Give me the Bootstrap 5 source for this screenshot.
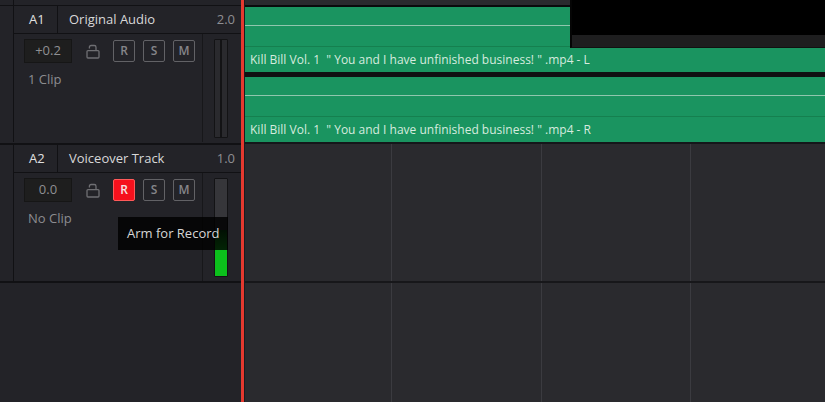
<!DOCTYPE html>
<html lang="en">
<head>
    <meta charset="UTF-8">
    <meta name="viewport" content="width=device-width, initial-scale=1.0">
    <title>Timeline</title>
    <link href="https://cdn.jsdelivr.net/npm/bootstrap@5.3.0/dist/css/bootstrap.min.css" rel="stylesheet">
    <style>
        html, body { height: 100%; }
        body { background: #28282c; color: #c4c4c6; font-family: "Open Sans", "Liberation Sans", sans-serif; font-size: 13px; overflow: hidden; }
        .editor { width: 825px; height: 402px; }
        .tracks { width: 241px; background: #232328; }
        .edge-line { margin-left: 13px; border-left: 1px solid #111114; }
        .top-gap { height: 6px; border-bottom: 1px solid #111114; }
        .track-one { height: 139px; border-bottom: 2px solid #111114; }
        .track-two { height: 138px; border-bottom: 2px solid #111114; }
        .track-head { height: 28px; border-bottom: 1px solid #111114; }
        .track-id { width: 44px; border-right: 1px solid #111114; color: #e0e0e0; padding-left: 15px; }
        .track-name { color: #d8d8d8; padding-left: 11px; }
        .track-gain { color: #8e8e92; padding-right: 6px; }
        .track-controls { height: 108px; }
        .controls { width: 189px; border-right: 1px solid #17171a; padding: 5px 0 0 10px; }
        .vol-box { width: 48px; height: 24px; background: #1e1e1e; border: 1px solid #161616; color: #8f8f92; }
        .lock-icon { margin: 0 13px 0 14px; }
        .rsm { width: 22px; height: 22px; border: 1px solid #626266; border-radius: 2px; color: #86868a; font-size: 12px; font-weight: 600; padding: 0; background: transparent; line-height: 20px; }
        .rsm-on { background: #f5111d; border-color: #ff5a5a; color: #f4e4e4; }
        .clip-count { color: #8c8c90; padding: 7px 0 0 4px; }
        .meter-col { padding: 5px 0 0 11px; }
        .meter { width: 14px; height: 99px; background: #36363a; border: 1px solid #131315; border-radius: 1px; }
        .meter-split { background: linear-gradient(90deg, #2a2a2e 45%, #131315 45%, #131315 55%, #2a2a2e 55%); }
        .meter-fill { height: 46px; background: linear-gradient(180deg, #0a5a12 0, #0cc01c 40%); }
        .playhead { width: 3px; background: #e5392f; z-index: 3; }
        .timeline { background: #111114; border-left: 1px solid #1b1b1f; }
        .lane-top { height: 7px; background: #2a2a2e; border-bottom: 2px solid #0a0a0c; }
        .clip-wave { height: 39px; background: #1a9460; position: relative; }
        .clip-wave::after { content: ""; position: absolute; left: 0; right: 0; top: 18px; height: 1px; background: #8fc6ad; }
        .clip-label { height: 26px; background: #1a9460; border-top: 1px solid #15804f; color: #d6ebdf; font-size: 12px; line-height: 25px; padding-left: 5px; white-space: pre; }
        .clip-gap { height: 5px; background: #101012; }
        .clip-end { height: 2px; background: #14171a; }
        .grid-row { background-color: #2a2a2e; background-image: linear-gradient(90deg, #3b3b40 1px, transparent 1px), linear-gradient(90deg, #3b3b40 1px, transparent 1px), linear-gradient(90deg, #3b3b40 1px, transparent 1px); background-repeat: no-repeat; background-position: 146px 0, 296px 0, 445px 0; background-size: 1px 100%; }
        .grid-a2 { height: 139px; border-bottom: 2px solid #17171a; }
        .viewer-overlay { top: 0; left: 570px; width: 255px; height: 48px; background: #1e1e1f; border-left: 2px solid #050505; border-bottom: 1px solid #111; z-index: 2; }
        .viewer-black { height: 35px; background: #000; }
        .record-tip { left: 118px; top: 217px; width: 110px; height: 33px; background: rgba(0, 0, 0, .82); color: #d6d6d6; font-size: 13px; line-height: 33px; padding-left: 9px; white-space: nowrap; z-index: 4; }
    </style>
</head>
<body>

<div class="editor d-flex position-relative">
    <div class="tracks flex-shrink-0">
        <div class="top-gap"><div class="edge-line h-100"></div></div>

        <div class="track-one">
            <div class="edge-line">
                <div class="track-head d-flex align-items-center">
                    <div class="track-id h-100 d-flex align-items-center">A1</div>
                    <div class="track-name flex-grow-1">Original Audio</div>
                    <div class="track-gain">2.0</div>
                </div>
                <div class="track-controls d-flex">
                    <div class="controls flex-shrink-0">
                        <div class="d-flex align-items-center">
                            <div class="vol-box d-flex align-items-center justify-content-center">+0.2</div>
                            <svg class="lock-icon" width="14" height="16" viewBox="0 0 14 16" fill="none" stroke="#6f6f73" stroke-width="1.3"><rect x="1" y="7.6" width="12" height="7.4" rx="1"/><path d="M3.4 5.5V4.2q0-1.7 1.7-1.7h3.2q1.7 0 1.7 1.7v3.2"/></svg>
                            <div class="d-flex gap-2">
                                <button class="rsm">R</button>
                                <button class="rsm">S</button>
                                <button class="rsm">M</button>
                            </div>
                        </div>
                        <div class="clip-count">1 Clip</div>
                    </div>
                    <div class="meter-col">
                        <div class="meter meter-split"></div>
                    </div>
                </div>
            </div>
        </div>

        <div class="track-two">
            <div class="edge-line">
                <div class="track-head d-flex align-items-center">
                    <div class="track-id h-100 d-flex align-items-center">A2</div>
                    <div class="track-name flex-grow-1">Voiceover Track</div>
                    <div class="track-gain">1.0</div>
                </div>
                <div class="track-controls d-flex">
                    <div class="controls flex-shrink-0">
                        <div class="d-flex align-items-center">
                            <div class="vol-box d-flex align-items-center justify-content-center">0.0</div>
                            <svg class="lock-icon" width="14" height="16" viewBox="0 0 14 16" fill="none" stroke="#6f6f73" stroke-width="1.3"><rect x="1" y="7.6" width="12" height="7.4" rx="1"/><path d="M3.4 5.5V4.2q0-1.7 1.7-1.7h3.2q1.7 0 1.7 1.7v3.2"/></svg>
                            <div class="d-flex gap-2">
                                <button class="rsm rsm-on">R</button>
                                <button class="rsm">S</button>
                                <button class="rsm">M</button>
                            </div>
                        </div>
                        <div class="clip-count">No Clip</div>
                    </div>
                    <div class="meter-col">
                        <div class="meter d-flex flex-column justify-content-end">
                            <div class="meter-fill"></div>
                        </div>
                    </div>
                </div>
            </div>
        </div>
    </div>

    <div class="playhead flex-shrink-0"></div>

    <div class="timeline flex-grow-1 d-flex flex-column">
        <div class="lane-top"></div>
        <div class="clip-wave"></div>
        <div class="clip-label">Kill Bill Vol. 1  " You and I have unfinished business! " .mp4 - L</div>
        <div class="clip-gap"></div>
        <div class="clip-wave"></div>
        <div class="clip-label">Kill Bill Vol. 1  " You and I have unfinished business! " .mp4 - R</div>
        <div class="clip-end"></div>
        <div class="grid-row grid-a2"></div>
        <div class="grid-row flex-grow-1"></div>
    </div>

    <div class="viewer-overlay position-absolute">
        <div class="viewer-black"></div>
    </div>
    <div class="record-tip position-absolute">Arm for Record</div>
</div>

<script src="https://cdn.jsdelivr.net/npm/bootstrap@5.3.0/dist/js/bootstrap.bundle.min.js"></script>
</body>
</html>
